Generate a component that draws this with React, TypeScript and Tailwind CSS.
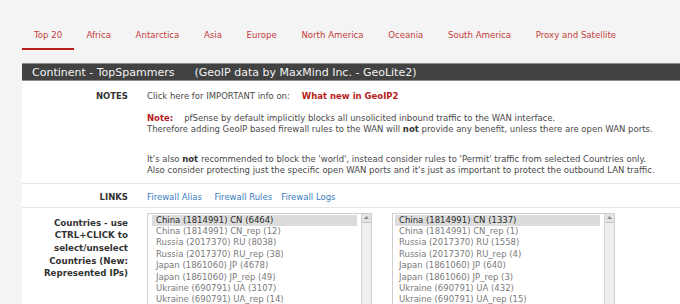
import React from 'react';

const tabs = [
  'Top 20',
  'Africa',
  'Antarctica',
  'Asia',
  'Europe',
  'North America',
  'Oceania',
  'South America',
  'Proxy and Satellite',
];

const sourceList = [
  'China (1814991) CN (6464)',
  'China (1814991) CN_rep (12)',
  'Russia (2017370) RU (8038)',
  'Russia (2017370) RU_rep (38)',
  'Japan (1861060) JP (4678)',
  'Japan (1861060) JP_rep (49)',
  'Ukraine (690791) UA (3107)',
  'Ukraine (690791) UA_rep (14)',
];

const represented = [
  'China (1814991) CN (1337)',
  'China (1814991) CN_rep (1)',
  'Russia (2017370) RU (1558)',
  'Russia (2017370) RU_rep (4)',
  'Japan (1861060) JP (640)',
  'Japan (1861060) JP_rep (3)',
  'Ukraine (690791) UA (432)',
  'Ukraine (690791) UA_rep (15)',
];

function ScrollBar() {
  return (
    <div className="w-[10px] shrink-0 border-l border-[#d4d4d4] bg-[#efefef]">
      <div className="flex h-[9px] items-center justify-center border-b border-[#c9c9c9] bg-[#e4e4e4]">
        <svg width="5" height="3" viewBox="0 0 5 3">
          <path d="M0 3 L2.5 0 L5 3 Z" fill="#8a8a8a" />
        </svg>
      </div>
    </div>
  );
}

function CountrySelect({ items, width, padLeft }: { items: string[]; width: string; padLeft: string }) {
  return (
    <div className={`flex h-[100px] border-x border-t border-[#cfcfcf] bg-white ${width}`}>
      <div className={`flex-1 pt-px pr-[4px] ${padLeft}`}>
        {items.map((item, idx) => (
          <div
            key={item}
            className={
              idx === 0
                ? 'h-[11.4px] whitespace-nowrap bg-[#dcdcdc] pl-[4px] leading-[11.4px] text-[#2a2a2a]'
                : 'h-[11.4px] whitespace-nowrap pl-[4px] leading-[11.4px] text-[#7a7a7a]'
            }
          >
            {item}
          </div>
        ))}
      </div>
      <ScrollBar />
    </div>
  );
}

export default function App() {
  return (
    <div className="h-[304px] w-[680px] overflow-hidden bg-[#f4f4f4] font-['DejaVu_Sans',sans-serif]">
      {/* Tabs */}
      <div className="flex pl-[22px] pt-[22px] text-[8.6px] leading-[11px] text-[#c43c3c]">
        {tabs.map((tab, idx) => (
          <div
            key={tab}
            className={
              idx === 0
                ? 'whitespace-nowrap border-b-2 border-[#b71c1c] px-[12px] py-[7.5px]'
                : 'whitespace-nowrap border-b-2 border-transparent px-[12.3px] py-[7.5px]'
            }
          >
            {tab}
          </div>
        ))}
      </div>

      {/* Panel */}
      <div className="ml-[22px] mt-[13px] w-[720px] bg-white text-[8.5px] leading-[11.4px] text-[#4a4a4a]">
        <div className="flex h-[18px] items-center border-y border-[#8c8c8c] bg-[#424242] pl-[10px] text-[11px] leading-[13px] text-[#f2f2f2]">
          <span>Continent - TopSpammers</span>
          <span className="ml-[20px]">(GeoIP data by MaxMind Inc. - GeoLite2)</span>
        </div>

        {/* Notes */}
        <div className="grid grid-cols-[113px_1fr] border-b border-[#e6e6e6]">
          <div className="pr-[7px] pt-[10.3px] text-right font-bold text-[#333]">NOTES</div>
          <div className="pb-[6.3px] pl-[12px] pt-[10.3px] whitespace-nowrap">
            <div>
              Click here for IMPORTANT info on:
              <span className="ml-[12px] font-bold text-[#b71c1c]">What new in GeoIP2</span>
            </div>
            <div className="mt-[10.3px]">
              <span className="font-bold text-[#b71c1c]">Note:</span>
              <span className="ml-[11px]">
                pfSense by default implicitly blocks all unsolicited inbound traffic to the WAN interface.
              </span>
            </div>
            <div>
              Therefore adding GeoIP based firewall rules to the WAN will <b className="text-[#333]">not</b> provide
              any benefit, unless there are open WAN ports.
            </div>
            <div className="mt-[17.8px]">
              It's also <b className="text-[#333]">not</b> recommended to block the 'world', instead consider rules to
              'Permit' traffic from selected Countries only.
            </div>
            <div>
              Also consider protecting just the specific open WAN ports and it's just as important to protect the
              outbound LAN traffic.
            </div>
          </div>
        </div>

        {/* Links */}
        <div className="grid grid-cols-[113px_1fr] border-b border-[#e6e6e6]">
          <div className="pb-[3.5px] pr-[7px] pt-[8px] text-right font-bold text-[#333]">LINKS</div>
          <div className="flex pb-[3.5px] pl-[12px] pt-[8px] text-[#3b7dbf]">
            <span>Firewall Alias</span>
            <span className="ml-[12.5px]">Firewall Rules</span>
            <span className="ml-[9px]">Firewall Logs</span>
          </div>
        </div>

        {/* Countries */}
        <div className="grid grid-cols-[113px_1fr]">
          <div className="pr-[7px] pt-[9.2px] text-right text-[8.7px] font-bold leading-[12.6px] text-[#333] whitespace-nowrap">
            Countries - use
            <br />
            CTRL+CLICK to
            <br />
            select/unselect
            <br />
            Countries (New:
            <br />
            Represented IPs)
          </div>
          <div className="flex gap-[20px] pl-[12px] pt-[5px]">
            <CountrySelect items={sourceList} width="w-[225px]" padLeft="pl-[4px]" />
            <CountrySelect items={represented} width="w-[223px]" padLeft="pl-[2px]" />
          </div>
        </div>
      </div>
    </div>
  );
}
